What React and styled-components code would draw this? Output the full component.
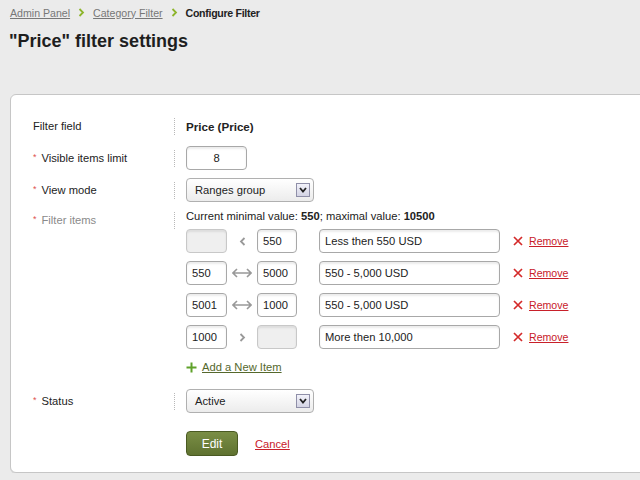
import React from "react"
import styled, { createGlobalStyle } from "styled-components"

const GlobalStyle = createGlobalStyle`
  html, body {
    margin: 0;
    padding: 0;
    background: #ebebeb;
    overflow: hidden;
    font-family: "Liberation Sans", Arial, sans-serif;
    font-size: 11.2px;
    color: #222;
  }
`

const items = [
  { from: "", to: "550", sign: "lt", label: "Less then 550 USD" },
  { from: "550", to: "5000", sign: "range", label: "550 - 5,000 USD" },
  { from: "5001", to: "1000", sign: "range", label: "550 - 5,000 USD" },
  { from: "1000", to: "", sign: "gt", label: "More then 10,000" },
]

const Chevron = ({ dir = "right", color = "#8db52b" }) => (
  <svg width="7" height="9" viewBox="0 0 7 9">
    <path
      d={dir === "right" ? "M1.5 1 L5 4.5 L1.5 8" : "M5.5 1 L2 4.5 L5.5 8"}
      fill="none"
      stroke={color}
      strokeWidth="1.8"
    />
  </svg>
)

const SignIcon = ({ sign }) => {
  if (sign === "range")
    return (
      <svg width="20" height="10" viewBox="0 0 20 10">
        <path d="M1 5 H19 M5 1 L1 5 L5 9 M15 1 L19 5 L15 9" fill="none" stroke="#999" strokeWidth="1.6" />
      </svg>
    )
  return <Chevron dir={sign === "lt" ? "left" : "right"} color="#999" />
}

const SelectBox = ({ value, width }) => (
  <Select $width={width}>
    <span>{value}</span>
    <ArrowBox>
      <svg width="8" height="6" viewBox="0 0 8 6">
        <path d="M1 1 L4 4.5 L7 1" fill="none" stroke="#222" strokeWidth="1.8" />
      </svg>
    </ArrowBox>
  </Select>
)

const App = () => {
  return (
    <Page>
      <GlobalStyle />
      <Breadcrumbs>
        <Crumb>Admin Panel</Crumb>
        <Chevron />
        <Crumb>Category Filter</Crumb>
        <Chevron />
        <Current>Configure Filter</Current>
      </Breadcrumbs>
      <Title>"Price" filter settings</Title>

      <Panel>
        <Row>
          <Label>Filter field</Label>
          <Sep />
          <Value>
            <Strong>Price (Price)</Strong>
          </Value>
        </Row>
        <Row $gap={8}>
          <Label>
            <Req>*</Req>Visible items limit
          </Label>
          <Sep />
          <Value>
            <Input $width={61} $center>8</Input>
          </Value>
        </Row>
        <Row $gap={8}>
          <Label>
            <Req>*</Req>View mode
          </Label>
          <Sep />
          <Value>
            <SelectBox value="Ranges group" width={128} />
          </Value>
        </Row>
        <Row $gap={8} $top>
          <Label $muted $top>
            <Req>*</Req>Filter items
          </Label>
          <Sep $top />
          <Value $column>
            <Info>
              Current minimal value: <b>550</b>; maximal value: <b>10500</b>
            </Info>
            <ItemList>
              {items.map((it, i) => (
                <ItemRow key={i}>
                  <Input $width={41} $disabled={!it.from}>{it.from}</Input>
                  <SignCell>
                    <SignIcon sign={it.sign} />
                  </SignCell>
                  <Input $width={40} $disabled={!it.to}>{it.to}</Input>
                  <Input $width={181} $wide>{it.label}</Input>
                  <RemoveLink>
                    <svg width="10" height="10" viewBox="0 0 10 10">
                      <path d="M1 1 L9 9 M9 1 L1 9" stroke="#d42a2a" strokeWidth="1.7" />
                    </svg>
                    <u>Remove</u>
                  </RemoveLink>
                </ItemRow>
              ))}
            </ItemList>
            <AddLink>
              <svg width="11" height="11" viewBox="0 0 11 11">
                <path d="M5.5 0.5 V10.5 M0.5 5.5 H10.5" stroke="#5fa12a" strokeWidth="2" />
              </svg>
              <u>Add a New Item</u>
            </AddLink>
          </Value>
        </Row>
        <Row $gap={15}>
          <Label>
            <Req>*</Req>Status
          </Label>
          <Sep />
          <Value>
            <SelectBox value="Active" width={128} />
          </Value>
        </Row>
        <Actions>
          <EditButton>Edit</EditButton>
          <CancelLink>Cancel</CancelLink>
        </Actions>
      </Panel>
    </Page>
  )
}

export default App

const Page = styled.div`
  padding: 5px 0 0 0;
`

const Breadcrumbs = styled.div`
  display: flex;
  align-items: center;
  gap: 8px;
  padding-left: 10px;
  height: 15px;
  font-size: 10.6px;
`

const Crumb = styled.span`
  color: #777;
  text-decoration: underline;
`

const Current = styled.span`
  color: #222;
  font-weight: bold;
  letter-spacing: -0.3px;
`

const Title = styled.h1`
  margin: 9px 0 0 9px;
  font-size: 18px;
  line-height: 24px;
  font-weight: bold;
  color: #1e1e1e;
`

const Panel = styled.div`
  margin: 41px 0 0 10px;
  width: 680px;
  box-sizing: border-box;
  background: #fff;
  border: 1px solid #c6c6c6;
  border-radius: 6px;
  box-shadow: 0 1px 0 #d8d8d8;
  padding: 19px 0 16px 22px;
`

const Row = styled.div`
  display: flex;
  align-items: ${(p) => (p.$top ? "flex-start" : "center")};
  min-height: 24px;
  margin-top: ${(p) => p.$gap || 0}px;
`

const Label = styled.div`
  width: 141px;
  flex-shrink: 0;
  color: ${(p) => (p.$muted ? "#8a8a8a" : "#222")};
  padding-top: ${(p) => (p.$top ? "4px" : "0")};
`

const Req = styled.span`
  color: #e05050;
  font-size: 9px;
  margin-right: 5px;
  vertical-align: 2px;
`

const Sep = styled.div`
  width: 0;
  height: 17px;
  border-left: 1px dotted #b8b8b8;
  margin-top: ${(p) => (p.$top ? "2px" : "0")};
`

const Value = styled.div`
  margin-left: 11px;
  display: flex;
  flex-direction: ${(p) => (p.$column ? "column" : "row")};
  align-items: ${(p) => (p.$column ? "flex-start" : "center")};
`

const Strong = styled.span`
  font-weight: bold;
  font-size: 11.6px;
`

const Input = styled.div`
  width: ${(p) => p.$width}px;
  height: 24px;
  box-sizing: border-box;
  border: 1px solid ${(p) => (p.$disabled ? "#c8c8c8" : "#a8a8a8")};
  border-radius: 4px;
  background: ${(p) => (p.$disabled ? "#efefef" : "#fff")};
  box-shadow: inset 0 2px 2px rgba(0, 0, 0, 0.08);
  display: flex;
  align-items: center;
  justify-content: ${(p) => (p.$center ? "center" : "flex-start")};
  padding: 0 5px;
  margin-left: ${(p) => (p.$wide ? "22px" : "0")};
  color: #222;
`

const Select = styled.div`
  width: ${(p) => p.$width}px;
  height: 24px;
  box-sizing: border-box;
  border: 1px solid #b0b0b0;
  border-radius: 4px;
  background: linear-gradient(#ffffff, #ececec);
  display: flex;
  align-items: center;
  justify-content: space-between;
  padding: 0 3px 0 8px;
`

const ArrowBox = styled.div`
  width: 14px;
  height: 14px;
  box-sizing: border-box;
  border: 1px solid #8f8fa8;
  background: linear-gradient(#f2f2fa, #d4d4e4);
  display: flex;
  align-items: center;
  justify-content: center;
`

const Info = styled.div`
  line-height: 14px;
  margin-top: -1px;
`

const ItemList = styled.div`
  display: flex;
  flex-direction: column;
  gap: 8px;
  margin-top: 6px;
`

const ItemRow = styled.div`
  display: flex;
  align-items: center;
`

const SignCell = styled.div`
  width: 30px;
  display: flex;
  justify-content: center;
`

const RemoveLink = styled.a`
  display: flex;
  align-items: center;
  gap: 6px;
  margin-left: 13px;
  color: #c8202a;
  font-size: 10.6px;
  cursor: pointer;
`

const AddLink = styled.a`
  display: flex;
  align-items: center;
  gap: 5px;
  margin-top: 11px;
  color: #55682c;
  line-height: 14px;
  cursor: pointer;
`

const Actions = styled.div`
  display: flex;
  align-items: center;
  gap: 17px;
  margin: 18px 0 0 153px;
`

const EditButton = styled.button`
  width: 52px;
  height: 25px;
  border: 1px solid #4a5a22;
  border-radius: 4px;
  background: linear-gradient(#7a8e45, #5f7230);
  color: #fff;
  font-family: "Liberation Sans", Arial, sans-serif;
  font-size: 12px;
  padding: 0;
  cursor: pointer;
`

const CancelLink = styled.a`
  color: #c8202a;
  text-decoration: underline;
  cursor: pointer;
`
